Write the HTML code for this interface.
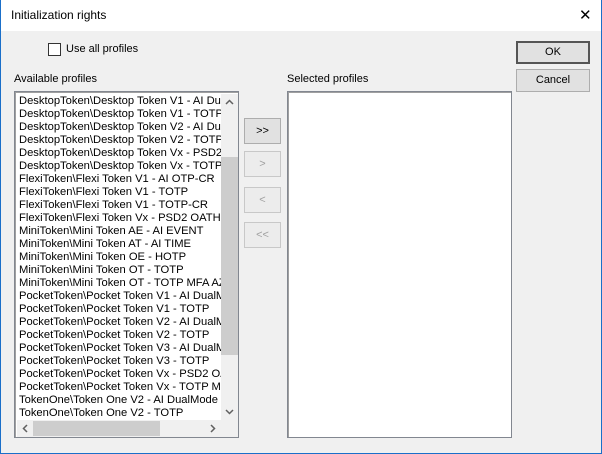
<!DOCTYPE html>
<html><head><style>
*{box-sizing:border-box;margin:0;padding:0}
body{width:602px;height:454px;background:#f0f0f0;position:relative;overflow:hidden;font-family:"Liberation Sans",sans-serif;font-size:11px;color:#000;border:1px solid #1a6fc9;border-top:none}
.title{position:absolute;left:0;top:0;width:600px;height:31px;background:#fff;font-size:12px}
.title span{position:absolute;left:10px;top:8px}
.close{position:absolute;left:578px;top:6px;font-size:15px}
.abs{position:absolute}
.btn{position:absolute;background:#e1e1e1;border:1px solid #adadad;text-align:center;line-height:21px}
.dis{color:#a0a0a0;background:#ececec;border-color:#c8c8c8}
.list{position:absolute;background:#fff;border:1px solid #828790;box-shadow:inset 1px 1px 0 #a0a0a0}
.items{position:absolute;left:4px;top:3px;width:204px;overflow:hidden;white-space:nowrap;line-height:13px;font-size:11.2px}
</style></head><body>
<div class="title"><span>Initialization rights</span><div class="close">✕</div></div>
<div class="abs" style="left:47px;top:43px;width:13px;height:13px;border:1px solid #333;background:#fff"></div>
<div class="abs" style="left:65px;top:43px">Use all profiles</div>
<div class="abs" style="left:13px;top:73px">Available profiles</div>
<div class="abs" style="left:286px;top:73px">Selected profiles</div>
<div class="list" style="left:13px;top:91px;width:225px;height:347px">
<div class="items">DesktopToken\Desktop Token V1 - AI DualMode<br>DesktopToken\Desktop Token V1 - TOTP<br>DesktopToken\Desktop Token V2 - AI DualMode<br>DesktopToken\Desktop Token V2 - TOTP<br>DesktopToken\Desktop Token Vx - PSD2 OATH<br>DesktopToken\Desktop Token Vx - TOTP<br>FlexiToken\Flexi Token V1 - AI OTP-CR<br>FlexiToken\Flexi Token V1 - TOTP<br>FlexiToken\Flexi Token V1 - TOTP-CR<br>FlexiToken\Flexi Token Vx - PSD2 OATH<br>MiniToken\Mini Token AE - AI EVENT<br>MiniToken\Mini Token AT - AI TIME<br>MiniToken\Mini Token OE - HOTP<br>MiniToken\Mini Token OT - TOTP<br>MiniToken\Mini Token OT - TOTP MFA AZURE<br>PocketToken\Pocket Token V1 - AI DualMode<br>PocketToken\Pocket Token V1 - TOTP<br>PocketToken\Pocket Token V2 - AI DualMode<br>PocketToken\Pocket Token V2 - TOTP<br>PocketToken\Pocket Token V3 - AI DualMode<br>PocketToken\Pocket Token V3 - TOTP<br>PocketToken\Pocket Token Vx - PSD2 OATH<br>PocketToken\Pocket Token Vx - TOTP MFA<br>TokenOne\Token One V2 - AI DualMode<br>TokenOne\Token One V2 - TOTP</div>
<div class="abs" style="left:206px;top:2px;width:17px;height:326px;background:#f0f0f0"></div>
<div class="abs" style="left:206px;top:65px;width:17px;height:198px;background:#cdcdcd"></div>
<svg class="abs" style="left:206px;top:2px" width="17" height="17"><path d="M5 10 L8.5 6.5 L12 10" stroke="#606060" stroke-width="1.5" fill="none"/></svg>
<svg class="abs" style="left:206px;top:311px" width="17" height="17"><path d="M5 7 L8.5 10.5 L12 7" stroke="#606060" stroke-width="1.5" fill="none"/></svg>
<div class="abs" style="left:2px;top:328px;width:221px;height:17px;background:#f0f0f0"></div>
<div class="abs" style="left:18px;top:329px;width:127px;height:15px;background:#cdcdcd"></div>
<svg class="abs" style="left:2px;top:328px" width="17" height="17"><path d="M10 5 L6.5 8.5 L10 12" stroke="#606060" stroke-width="1.5" fill="none"/></svg>
<svg class="abs" style="left:189px;top:328px" width="17" height="17"><path d="M7 5 L10.5 8.5 L7 12" stroke="#606060" stroke-width="1.5" fill="none"/></svg>
</div>
<div class="list" style="left:286px;top:91px;width:225px;height:347px"></div>
<div class="btn" style="left:243px;top:118px;width:37px;height:26px;line-height:24px">&gt;&gt;</div>
<div class="btn dis" style="left:243px;top:151px;width:37px;height:26px;line-height:24px">&gt;</div>
<div class="btn dis" style="left:243px;top:187px;width:37px;height:26px;line-height:24px">&lt;</div>
<div class="btn dis" style="left:243px;top:222px;width:37px;height:26px;line-height:24px">&lt;&lt;</div>
<div class="btn" style="left:515px;top:41px;width:74px;height:23px;border:2px solid #555;line-height:19px">OK</div>
<div class="btn" style="left:515px;top:69px;width:74px;height:23px">Cancel</div>
</body></html>
